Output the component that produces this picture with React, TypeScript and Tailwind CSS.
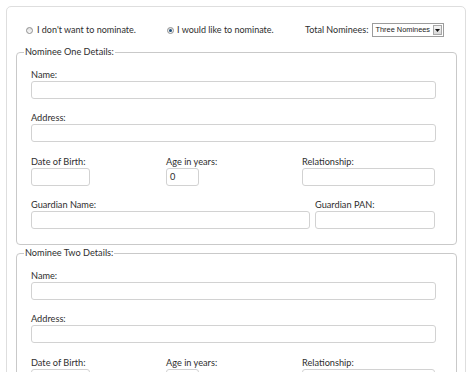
import React from "react";

const font = { fontFamily: "Lato, 'Open Sans', sans-serif" };

function Radio({ checked }: { checked?: boolean }) {
  return (
    <span className="inline-flex h-[7px] w-[7px] shrink-0 items-center justify-center rounded-full border border-[#8f8f8f] bg-gradient-to-b from-[#e0e0e0] to-[#fafafa]">
      {checked && <span className="h-[3px] w-[3px] rounded-full bg-[#1f4f7a]" />}
    </span>
  );
}

function Field({
  label,
  value,
  className,
  inputClassName,
}: {
  label: string;
  value?: string;
  className?: string;
  inputClassName?: string;
}) {
  return (
    <div className={className}>
      <div className="h-[12px] whitespace-nowrap text-[9.2px] leading-[12px] text-[#2e2e2e]">{label}</div>
      <div
        className={
          "flex h-[18px] items-center rounded-[3px] border border-[#d2d2d2] bg-white pl-[3px] text-[9.2px] text-[#2e2e2e] " +
          (inputClassName ?? "w-full")
        }
      >
        {value}
      </div>
    </div>
  );
}

function Nominee({ title }: { title: string }) {
  return (
    <fieldset className="rounded-[4px] border border-[#c9c9c9] pl-[7px] pr-[8px] pb-[15px]">
      <legend className="whitespace-nowrap px-[1px] text-[9.2px] leading-[14px] text-[#2e2e2e]">{title}</legend>
      <div className="pl-[7px] pr-[12px] pt-[10px]">
        <Field label="Name:" />
        <Field label="Address:" className="mt-[13px]" />
        <div className="mt-[14px] grid grid-cols-[135px_136px_133px]">
          <Field label="Date of Birth:" inputClassName="w-[59px]" />
          <Field label="Age in years:" value="0" inputClassName="w-[33px]" />
          <Field label="Relationship:" />
        </div>
        <div className="mt-[13px] grid grid-cols-[279px_120px] gap-[5px]">
          <Field label="Guardian Name:" />
          <Field label="Guardian PAN:" />
        </div>
      </div>
    </fieldset>
  );
}

export default function App() {
  return (
    <div className="h-[372px] w-[474px] overflow-hidden bg-white p-[6px]" style={font}>
      <div className="w-[460px] rounded-[5px] border border-[#dedede] pl-[9px] pr-[8px] pt-[16px]">
        <div className="flex h-[14px] items-center whitespace-nowrap pl-[10px] text-[9px] text-[#2e2e2e]">
          <div className="flex w-[141px] items-center gap-[4px]">
            <Radio />
            <span>I don't want to nominate.</span>
          </div>
          <div className="flex w-[138px] items-center gap-[3px]">
            <Radio checked />
            <span>I would like to nominate.</span>
          </div>
          <span>Total Nominees:</span>
          <div className="ml-[4px] flex h-[14px] w-[72px] shrink-0 items-center border border-[#9c9c9c] bg-white">
            <span
              className="flex-1 overflow-hidden whitespace-nowrap pl-[2px] text-[7.4px] leading-[12px] text-[#222]"
              style={{ fontFamily: "'Liberation Sans', Arial, sans-serif" }}
            >
              Three Nominees
            </span>
            <span className="mr-[1px] flex h-[10px] w-[9px] shrink-0 items-center justify-center border border-[#a8a8a8] bg-gradient-to-b from-[#f4f4f4] to-[#d8d8d8]">
              <svg width="5" height="3" viewBox="0 0 5 3">
                <path d="M0 0h5L2.5 3z" fill="#111" />
              </svg>
            </span>
          </div>
        </div>
        <div className="mt-[8px]">
          <Nominee title="Nominee One Details:" />
        </div>
        <div className="mt-[1px]">
          <Nominee title="Nominee Two Details:" />
        </div>
      </div>
    </div>
  );
}
